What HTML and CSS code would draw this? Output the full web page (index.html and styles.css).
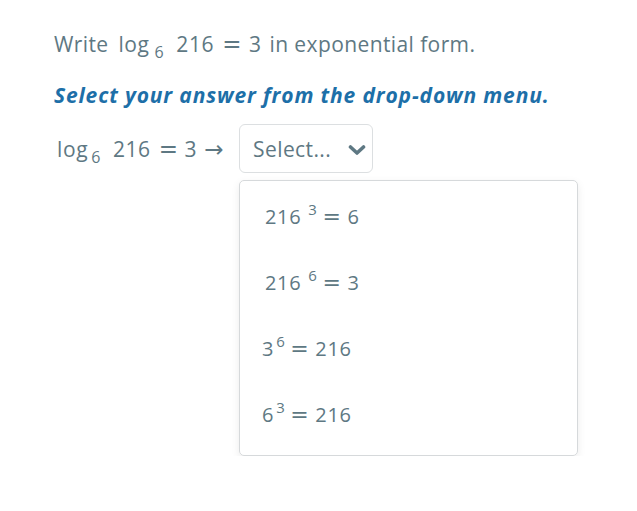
FILE: index.html
```html
<!DOCTYPE html>
<html lang="en">
<head>
  <meta charset="UTF-8"/>
  <title>Exponential form</title>
  <link rel="stylesheet" href="styles.css">
</head>
<body>

<div class="question">
  <p class="prompt">Write <span class="math">log<sub>6</sub>216<span class="op">=</span>3</span> in exponential form.</p>
  <p class="hint">Select your answer from the drop-down menu.</p>

  <div class="answer-row">
    <span class="math lead">log<sub>6</sub>216<span class="op">=</span>3<span class="arrow">&rarr;</span></span>
    <div class="picker">
      <button class="select"><span>Select...</span>
        <svg class="chev" width="18" height="12" viewBox="0 0 18 12"><path d="M2.5 3 L9 9 L15.5 3" fill="none" stroke="#5e7883" stroke-width="3.6" stroke-linecap="round" stroke-linejoin="round"/></svg>
      </button>
      <ul class="menu">
        <li><span>216<sup>3</sup><span class="op">=</span>6</span></li>
        <li><span>216<sup>6</sup><span class="op">=</span>3</span></li>
        <li class="tight"><span>3<sup>6</sup><span class="op">=</span>216</span></li>
        <li class="tight"><span>6<sup>3</sup><span class="op">=</span>216</span></li>
      </ul>
    </div>
  </div>
</div>

</body>
</html>
```

FILE: styles.css
```css
*{box-sizing:border-box}
body{margin:0;background:#fff;color:#5e7883;font-family:"Open Sans","Noto Sans",sans-serif}
.question{padding:29px 0 0 54px}
.prompt{margin:0;font-size:21px;line-height:30px;letter-spacing:.4px}
.hint{margin:14px 0 0;font-size:21px;font-weight:700;font-style:italic;color:#1d6fa8;letter-spacing:.85px}
.math{letter-spacing:.6px;margin:0 2px 0 4px}
.math sub{font-size:16px;vertical-align:-6px;margin:0 12px 0 5px}
.op{font-family:"DejaVu Sans",sans-serif;font-size:23px;line-height:0;margin:0 7px 0 8px}
.arrow{font-family:"DejaVu Sans",sans-serif;font-size:23px;line-height:0;margin-left:7px}
.answer-row{display:flex;align-items:flex-start;gap:13px;margin-top:15px}
.lead{font-size:21px;line-height:30px;padding-top:10px;margin-left:3px}
.lead sub{margin:0 12px 0 3px}
.lead .op{margin:0 6px 0 8px}
.picker{display:flex;flex-direction:column;gap:7px}
.select{display:flex;align-items:center;width:134px;height:49px;padding:0 6px 0 13px;border:1px solid #dcdfe1;border-radius:6px;background:#fff;color:#5e7883;font-family:inherit;font-size:21px;letter-spacing:.4px}
.chev{margin-left:auto;margin-top:3px}
.menu{list-style:none;margin:0;padding:2px 0 8px;width:339px;height:276px;border:1px solid #d6d9db;border-radius:5px;box-shadow:0 3px 8px rgba(0,0,0,.08)}
.menu li{height:66px;display:flex;align-items:center;padding:0 0 0 25px;font-size:20px;letter-spacing:.6px}
.menu li.tight{padding-left:22px}
.menu sup{font-size:15px;vertical-align:9px;line-height:0;margin:0 0 0 7px}
.menu li.tight sup{margin-left:2px}
.menu .op{font-size:22px;margin:0 6px 0 5px}
```
